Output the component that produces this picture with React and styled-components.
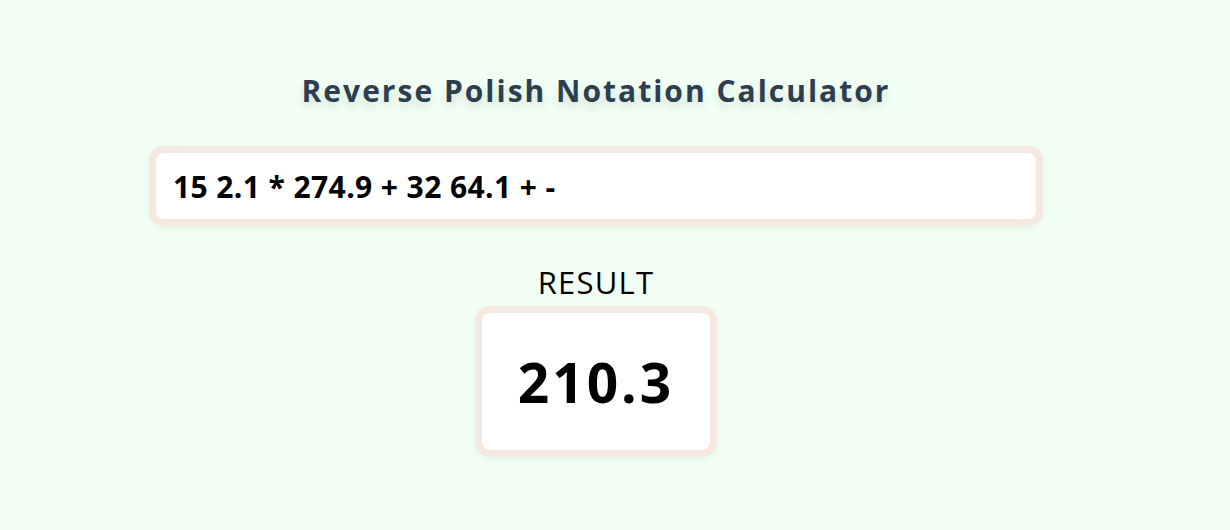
import React, {useState} from "react";
import styled, {createGlobalStyle} from "styled-components";

const GlobalStyle = createGlobalStyle`
    html, body {
        margin: 0;
        padding: 0;
        background: #f2fff5;
    }
    body {
        font-family: "Open Sans", "Liberation Sans", sans-serif;
    }
`;

const Page = styled.main`
    min-height: 530px;
    padding: 70px 38px 0 0;
    box-sizing: border-box;
    display: flex;
    flex-direction: column;
    align-items: center;
`;

const Title = styled.h1`
    margin: 0;
    font-family: "Open Sans", sans-serif;
    font-size: 30px;
    font-weight: 700;
    letter-spacing: 2px;
    color: #2c3e50;
    text-shadow: 0 6px 10px rgba(0, 0, 0, 0.12);
`;

const Frame = styled.div`
    box-sizing: border-box;
    background: #fff;
    border: 7px solid #f5e8de;
    border-radius: 15px;
    box-shadow: 0 2px 8px rgba(0, 0, 0, 0.06);
`;

const InputFrame = styled(Frame)`
    width: 894px;
    height: 80px;
    margin-top: 35px;
    display: flex;
    align-items: center;
`;

const ExpressionInput = styled.input`
    flex: 1;
    border: none;
    outline: none;
    background: transparent;
    padding: 0 0 0 17px;
    font-family: "Open Sans", sans-serif;
    font-size: 30px;
    font-weight: 700;
    letter-spacing: 0.4px;
    color: #000;
`;

const ResultLabel = styled.div`
    margin-top: 36px;
    font-family: "Open Sans", sans-serif;
    font-size: 31px;
    line-height: 40px;
    color: #000;
    letter-spacing: 1.2px;
`;

const ResultFrame = styled(Frame)`
    width: 242px;
    height: 151px;
    margin-top: 4px;
    display: flex;
    align-items: center;
    justify-content: center;
`;

const ResultValue = styled.span`
    font-family: "Open Sans", sans-serif;
    font-size: 55px;
    font-weight: 700;
    color: #000;
    letter-spacing: 3px;
`;

const evaluate = (expr) => {
    const stack = [];
    for (const tok of expr.trim().split(/\s+/)) {
        if (["+", "-", "*", "/"].includes(tok)) {
            const b = stack.pop();
            const a = stack.pop();
            if (a === undefined || b === undefined) return "";
            if (tok === "+") stack.push(a + b);
            if (tok === "-") stack.push(a - b);
            if (tok === "*") stack.push(a * b);
            if (tok === "/") stack.push(a / b);
        } else {
            const n = parseFloat(tok);
            if (isNaN(n)) return "";
            stack.push(n);
        }
    }
    if (stack.length !== 1) return "";
    return Math.round(stack[0] * 1000) / 1000;
};

const App = () => {
    const [expr, setExpr] = useState("15 2.1 * 274.9 + 32 64.1 + -");
    return (
        <>
            <GlobalStyle />
            <Page>
                <Title>Reverse Polish Notation Calculator</Title>
                <InputFrame>
                    <ExpressionInput value={expr} onChange={e => setExpr(e.target.value)} />
                </InputFrame>
                <ResultLabel>RESULT</ResultLabel>
                <ResultFrame>
                    <ResultValue>{evaluate(expr)}</ResultValue>
                </ResultFrame>
            </Page>
        </>
    );
};

export default App;
